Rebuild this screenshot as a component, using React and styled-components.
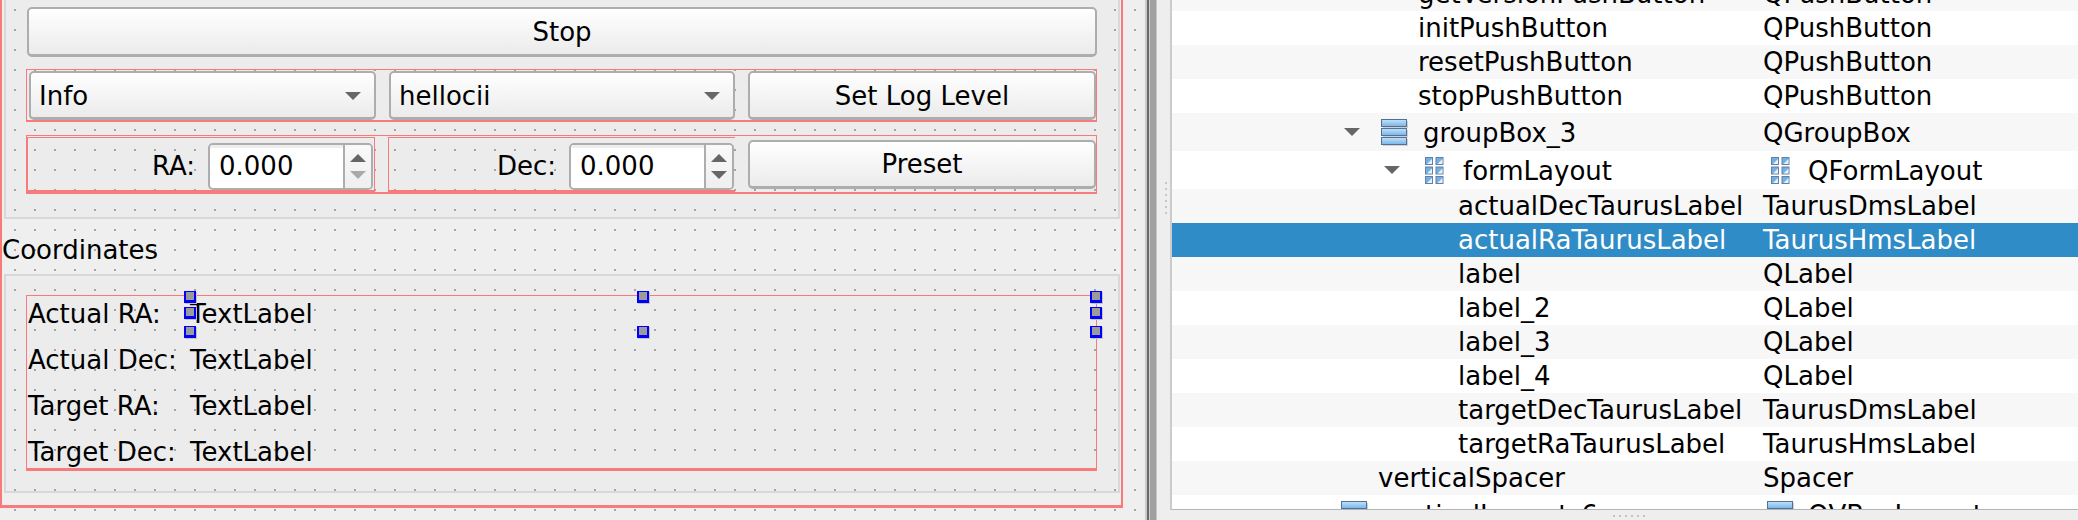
import React from "react";
import styled, { createGlobalStyle } from "styled-components";

const RED = "#f87a7a";

const GlobalStyle = createGlobalStyle`
    html, body {
        margin: 0;
        padding: 0;
        background: #eeeeee;
    }
    * {
        box-sizing: border-box;
    }
`;

const Page = styled.div`
    display: flex;
    width: 2078px;
    height: 520px;
    overflow: hidden;
    font-family: "DejaVu Sans", sans-serif;
    font-size: 26px;
    color: #000;
`;

const Canvas = styled.div`
    flex: none;
    width: 1145px;
    height: 520px;
    padding-right: 22px;
    background-color: #efefef;
    background-image: conic-gradient(at 2px 2px, transparent 75%, #a6a6a6 0);
    background-size: 20px 20px;
    background-position: 14px 9px;
`;

const FormFrame = styled.div`
    height: 508px;
    border-left: 2px solid ${RED};
    border-right: 2px solid ${RED};
    border-bottom: 3px solid ${RED};
`;

const GroupBox = styled.div`
    margin: 0 1px 0 2px;
    height: ${props => props.$height}px;
    padding: ${props => props.$top}px 21px 0 20px;
    border: 2px solid #d8d8d8;
    border-top-width: ${props => props.$open ? 0 : 2}px;
    background: rgba(0, 0, 0, 0.012);
`;

const Legend = styled.div`
    height: 55px;
    padding: 19px 0 0 0;
    line-height: 25px;
`;

const Button = styled.div`
    display: flex;
    align-items: center;
    justify-content: ${props => props.$combo ? "space-between" : "center"};
    height: ${props => props.$height || 49}px;
    margin: ${props => props.$margin || 0};
    padding: ${props => props.$combo ? "0 13px 0 8px" : 0};
    border: 2px solid #adadad;
    border-bottom-width: 3px;
    border-radius: 5px;
    background: linear-gradient(#ffffff, #ebebeb);
`;

const LogRow = styled.div`
    display: grid;
    grid-template-columns: 347px 346px 348px;
    column-gap: 13px;
    height: 53px;
    margin-top: 12px;
    padding: 1px 0 0 2px;
    border: 1px solid ${RED};
    border-bottom-width: 2px;

    ${Button} {
        padding-top: 2px;
    }
`;

const PresetRow = styled.div`
    display: grid;
    grid-template-columns: 348px 347px 348px;
    column-gap: 13px;
    height: 59px;
    margin-top: 13px;
    padding-top: 1px;
    border: 1px solid ${RED};
    border-bottom-width: 2px;
`;

const SpinLayout = styled.div`
    display: flex;
    align-items: center;
    justify-content: flex-end;
    gap: 13px;
    padding: 4px 1px 0 0;
    border: 1px solid ${RED};
    border-bottom-width: 2px;
    border-right-width: ${props => props.$closed ? 1 : 0}px;
`;

const SpinBox = styled.div`
    display: flex;
    flex: none;
    width: 165px;
    height: 47px;
    border: 2px solid #adadad;
    border-radius: 5px;
    background: #fff;
    overflow: hidden;
`;

const SpinValue = styled.div`
    flex: 1;
    padding: 0 0 0 9px;
    line-height: 43px;
    box-shadow: inset 0 3px 0 #eeeeee;
`;

const SpinButtons = styled.div`
    display: flex;
    flex: none;
    flex-direction: column;
    align-items: center;
    justify-content: center;
    gap: 9px;
    width: 28px;
    border-left: 2px solid #adadad;
    background: linear-gradient(#f9f9f9, #efefef);
`;

const Arrow = styled.span`
    display: block;
    flex: none;
    width: 0;
    height: 0;
    border-left: ${props => props.$size}px solid transparent;
    border-right: ${props => props.$size}px solid transparent;
    border-top: ${props => props.$up ? 0 : `${props.$height}px solid ${props.$color}`};
    border-bottom: ${props => props.$up ? `${props.$height}px solid ${props.$color}` : 0};
`;

const CoordForm = styled.div`
    position: relative;
    display: grid;
    grid-template-columns: 162px 1fr;
    grid-auto-rows: 34px;
    row-gap: 12px;
    height: 176px;
    padding: 1px 0 0 1px;
    border: 1px solid ${RED};
    border-bottom-width: 3px;
    align-items: center;
`;

const Selection = styled.div`
    position: absolute;
    left: 163px;
    top: 0;
    width: 906px;
    height: 35px;
`;

const Handle = styled.span`
    position: absolute;
    left: calc(${props => props.$x}% - 6px);
    top: ${props => props.$y - 5}px;
    width: 12px;
    height: 12px;
    background: #9b9b9b;
    border: 1px solid #0000ff;
    border-width: 1px 2px 3px 2px;
    box-shadow: 1px 1px 0 #c4c4c4;
`;

const Splitter = styled.div`
    flex: none;
    width: 12px;
    background: linear-gradient(to right,
        #cbcbcb 0 2px,
        #6a6a6a 2px 4px,
        #cfcfcf 4px 5px,
        #a0a0a0 5px 11px,
        #c6c6c6 11px 12px);
`;

const InspectorPane = styled.div`
    display: flex;
    flex: 1;
    flex-direction: column;
    min-width: 0;
    background: #eeeeee;
`;

const TreeArea = styled.div`
    display: flex;
    height: 510px;
`;

const GripColumn = styled.div`
    flex: none;
    width: 13px;
    padding: 182px 0 0 8px;
`;

const VerticalGrip = styled.div`
    width: 2px;
    height: 32px;
    background: linear-gradient(#c4c4c4 2px, transparent 2px);
    background-size: 2px 6px;
`;

const Tree = styled.div`
    flex: 1;
    min-width: 0;
    overflow: hidden;
    background: #fff;
    border-left: 2px solid #cbcbcb;
    border-bottom: 1px solid #b4b4b4;
`;

const TreeRows = styled.div`
    margin-top: -23px;
`;

const TreeRow = styled.div`
    display: grid;
    grid-template-columns: 591px 1fr;
    align-items: center;
    height: ${props => props.$tall ? 38 : 34}px;
    padding-top: ${props => props.$tall ? 2 : 0}px;
    white-space: nowrap;
    color: ${props => props.$selected ? "#fff" : "#000"};
    background: ${props => props.$selected ? "#308cc6" : props.$alt ? "#f7f7f7" : "#fff"};
`;

const NameCell = styled.div`
    display: flex;
    align-items: center;
    padding-left: ${props => props.$pad}px;
`;

const ClassCell = styled.div`
    display: flex;
    align-items: center;
`;

const Expander = styled.div`
    display: flex;
    flex: none;
    width: 37px;
    margin-bottom: 2px;
`;

const IconBox = styled.div`
    display: flex;
    flex: none;
    justify-content: center;
    width: 27px;
    margin: ${props => props.$margin || "0 15px 2px 0"};
`;

const BottomStrip = styled.div`
    display: flex;
    flex: 1;
    align-items: center;
    padding: 2px 0 0 456px;
`;

const HorizontalGrip = styled.div`
    width: 32px;
    height: 2px;
    background: linear-gradient(to right, #c4c4c4 2px, transparent 2px);
    background-size: 6px 2px;
`;

function BoxLayoutIcon() {
    const bars = [0, 9, 18];
    return (
        <svg width="27" height="27" viewBox="0 0 27 27">
            <defs>
                <linearGradient id="barFill" x1="0" y1="0" x2="0" y2="1">
                    <stop offset="0" stopColor="#c4e2f7" />
                    <stop offset="1" stopColor="#74b6ea" />
                </linearGradient>
            </defs>
            {bars.map(y => (
                <g key={y}>
                    <rect x="2" y={y + 2} width="25" height="7" fill="#d0d0d0" />
                    <rect x="0.5" y={y + 0.5} width="25" height="7" fill="url(#barFill)" stroke="#566f97" />
                </g>
            ))}
        </svg>
    );
}

function FormLayoutIcon() {
    const cells = [];
    [0, 9.5, 19].forEach(y => [0, 10.5].forEach(x => cells.push([x, y])));
    return (
        <svg width="19" height="27" viewBox="0 0 19 27">
            {cells.map(([x, y]) => (
                <g key={`${x}-${y}`}>
                    <rect x={x + 0.5} y={y + 0.5} width="7" height="7" fill="#6fb0e6" stroke="#6a7f9f" />
                    <path d={`M${x + 2} ${y + 7}L${x + 7} ${y + 2}V${y + 7}Z`} fill="#e4f1fb" />
                </g>
            ))}
        </svg>
    );
}

const ICONS = { box: BoxLayoutIcon, form: FormLayoutIcon };

const TREE = [
    { name: "getVersionPushButton", type: "QPushButton", pad: 246 },
    { name: "initPushButton", type: "QPushButton", pad: 246 },
    { name: "resetPushButton", type: "QPushButton", pad: 246 },
    { name: "stopPushButton", type: "QPushButton", pad: 246 },
    { name: "groupBox_3", type: "QGroupBox", pad: 172, open: true, icon: "box", classIcon: false },
    { name: "formLayout", type: "QFormLayout", pad: 212, open: true, icon: "form", classIcon: true },
    { name: "actualDecTaurusLabel", type: "TaurusDmsLabel", pad: 286 },
    { name: "actualRaTaurusLabel", type: "TaurusHmsLabel", pad: 286, selected: true },
    { name: "label", type: "QLabel", pad: 286 },
    { name: "label_2", type: "QLabel", pad: 286 },
    { name: "label_3", type: "QLabel", pad: 286 },
    { name: "label_4", type: "QLabel", pad: 286 },
    { name: "targetDecTaurusLabel", type: "TaurusDmsLabel", pad: 286 },
    { name: "targetRaTaurusLabel", type: "TaurusHmsLabel", pad: 286 },
    { name: "verticalSpacer", type: "Spacer", pad: 206 },
    { name: "verticalLayout_6", type: "QVBoxLayout", pad: 169, icon: "box", classIcon: true, tall: true },
];

const COORDS = ["Actual RA:", "Actual Dec:", "Target RA:", "Target Dec:"];

const HANDLES = [
    [0, 0], [50, 0], [100, 0],
    [0, 16], [100, 16],
    [0, 35], [50, 35], [100, 35],
];

function Spin({ dim }) {
    return (
        <SpinBox>
            <SpinValue>0.000</SpinValue>
            <SpinButtons>
                <Arrow $up $size={8} $height={8} $color="#666" />
                <Arrow $size={8} $height={8} $color={dim ? "#aaa" : "#666"} />
            </SpinButtons>
        </SpinBox>
    );
}

function Combo({ children }) {
    return (
        <Button $combo>
            {children}
            <Arrow $size={8} $height={8} $color="#666" />
        </Button>
    );
}

function Row({ item, alt }) {
    const Icon = item.icon ? ICONS[item.icon] : null;
    return (
        <TreeRow $alt={alt} $selected={item.selected} $tall={item.tall || item.open}>
            <NameCell $pad={item.pad}>
                {item.open && (
                    <Expander>
                        <Arrow $size={8} $height={8} $color="#666" />
                    </Expander>
                )}
                {Icon && <IconBox><Icon /></IconBox>}
                {item.name}
            </NameCell>
            <ClassCell>
                {item.classIcon && Icon && <IconBox $margin="0 14px 2px 4px"><Icon /></IconBox>}
                {item.type}
            </ClassCell>
        </TreeRow>
    );
}

export default function App() {
    return (
        <Page>
            <GlobalStyle />
            <Canvas>
                <FormFrame>
                    <GroupBox $open $height={219} $top={7}>
                        <Button $height={50} $margin="0 0 0 1px">Stop</Button>
                        <LogRow>
                            <Combo>Info</Combo>
                            <Combo>hellocii</Combo>
                            <Button>Set Log Level</Button>
                        </LogRow>
                        <PresetRow>
                            <SpinLayout $closed>RA:<Spin dim /></SpinLayout>
                            <SpinLayout>Dec:<Spin /></SpinLayout>
                            <Button $margin="3px 0 0 0">Preset</Button>
                        </PresetRow>
                    </GroupBox>
                    <Legend>Coordinates</Legend>
                    <GroupBox $height={219} $top={19}>
                        <CoordForm>
                            {COORDS.map(label => (
                                <React.Fragment key={label}>
                                    <span>{label}</span>
                                    <span>TextLabel</span>
                                </React.Fragment>
                            ))}
                            <Selection>
                                {HANDLES.map(([x, y]) => <Handle key={`${x}-${y}`} $x={x} $y={y} />)}
                            </Selection>
                        </CoordForm>
                    </GroupBox>
                </FormFrame>
            </Canvas>
            <Splitter />
            <InspectorPane>
                <TreeArea>
                    <GripColumn><VerticalGrip /></GripColumn>
                    <Tree>
                        <TreeRows>
                            {TREE.map((item, i) => <Row key={item.name} item={item} alt={i % 2 === 0} />)}
                        </TreeRows>
                    </Tree>
                </TreeArea>
                <BottomStrip><HorizontalGrip /></BottomStrip>
            </InspectorPane>
        </Page>
    );
}
